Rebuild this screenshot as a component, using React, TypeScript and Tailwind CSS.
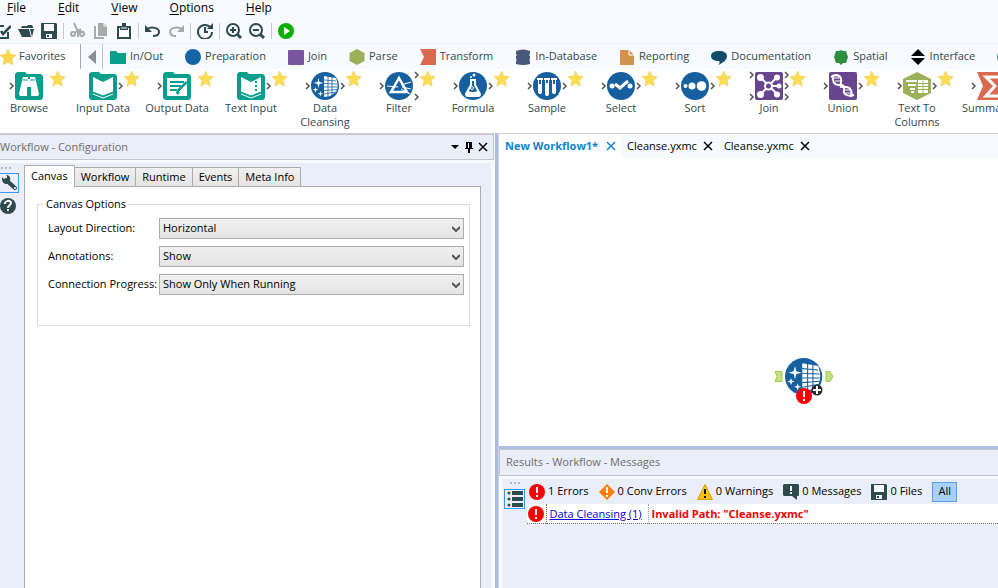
import type { ReactNode } from "react";

const TEAL = "#0a9f8d";
const BLUE = "#17609f";
const PURPLE = "#67468f";
const INK = "#2f4a4d";
const MUTED = "#a9a9a9";

const menus = ["File", "Edit", "View", "Options", "Help"];

/* ---------- toolbar ---------- */

function Glyph({ children }: { children: ReactNode }) {
  return (
    <svg viewBox="0 0 16 16" className="size-4 shrink-0" fill="none" aria-hidden="true">
      {children}
    </svg>
  );
}

const floppy = (
  <>
    <path d="M0 0h15l1 1v15H0z" fill={INK} />
    <path d="M3 1h10v7H3z" fill="#f7faff" />
    <path d="M5 11h6v4H5z" fill="#f7faff" />
    <path d="M6 12h2v2H6z" fill={INK} />
  </>
);

type ToolButton = { label: string; icon: ReactNode } | null;

const toolbar: ToolButton[] = [
  {
    label: "New",
    icon: (
      <>
        <path d="M9 3H1v12h12V9" stroke={INK} strokeWidth="2" />
        <path d="M6 8l2 3 8-8" stroke={INK} strokeWidth="2.500" />
      </>
    ),
  },
  {
    label: "Open",
    icon: (
      <>
        <path d="M3 5l1-2h5l1-1h4l1 2v1H3z" fill={INK} />
        <path d="M0 6h11l2 8H4z" fill={INK} />
        <path d="M12 6h4l-2 8z" fill={INK} />
      </>
    ),
  },
  { label: "Save", icon: floppy },
  null,
  {
    label: "Cut",
    icon: (
      <g stroke={MUTED} strokeWidth="2">
        <path d="M4 0l5 11M11 6L4 10M8 8l6 1" />
        <circle cx="3" cy="11" r="2" />
        <circle cx="12" cy="11" r="2" />
        <path d="M8 9v5" />
      </g>
    ),
  },
  {
    label: "Copy",
    icon: (
      <>
        <path d="M5 0h6l3 3v10H5z" fill={MUTED} />
        <path d="M11 0v3h3" stroke="#f7faff" />
        <path d="M2 3v12h9" stroke={MUTED} strokeWidth="2" />
      </>
    ),
  },
  {
    label: "Paste",
    icon: (
      <>
        <path d="M2 4h12v11H2z" stroke={INK} strokeWidth="2" />
        <path d="M4 3h8v4H4zM6 0h4v3H6z" fill={INK} />
        <path d="M5 5h6" stroke="#f7faff" />
      </>
    ),
  },
  null,
  {
    label: "Undo",
    icon: (
      <>
        <path d="M2 6c5-3 12-1 12 3 0 3-3 4-6 4" stroke={INK} strokeWidth="2" />
        <path d="M0 2v7h7z" fill={INK} />
      </>
    ),
  },
  {
    label: "Redo",
    icon: (
      <>
        <path d="M14 6C9 3 2 5 2 9c0 3 3 4 6 4" stroke={MUTED} strokeWidth="2" />
        <path d="M16 2v7H9z" fill={MUTED} />
      </>
    ),
  },
  null,
  {
    label: "Schedule",
    icon: (
      <>
        <path d="M13 4a7 7 0 1 0 2 5" stroke={INK} strokeWidth="2" />
        <path d="M10 6h6V0z" fill={INK} />
        <path d="M8 4v5h3" stroke={INK} strokeWidth="2" />
      </>
    ),
  },
  null,
  {
    label: "Zoom in",
    icon: (
      <g stroke={INK} strokeWidth="2">
        <circle cx="7" cy="7" r="6" />
        <path d="M11 11l4 4" strokeWidth="3" />
        <path d="M7 4v6M4 7h6" />
      </g>
    ),
  },
  {
    label: "Zoom out",
    icon: (
      <g stroke={INK} strokeWidth="2">
        <circle cx="7" cy="7" r="6" />
        <path d="M11 11l4 4" strokeWidth="3" />
        <path d="M4 7h6" />
      </g>
    ),
  },
  null,
  {
    label: "Run",
    icon: (
      <>
        <circle cx="8" cy="8" r="8" fill="#0db000" />
        <path d="M6 4l6 4-6 4z" fill="#fff" />
      </>
    ),
  },
];

/* ---------- tool categories ---------- */

const STAR = "M8 0l2.300 5.300L16 6l-4.200 3.900L13 16l-5-3-5 3 1.200-6.100L0 6l5.700-.7z";

const categories: { name: string; icon: ReactNode }[] = [
  { name: "In/Out", icon: <path d="M0 2h6l2 2h8v11H0z" fill={TEAL} /> },
  { name: "Preparation", icon: <circle cx="8" cy="8" r="8" fill="#1565a5" /> },
  { name: "Join", icon: <rect y="1" width="16" height="15" rx="1" fill="#79559f" /> },
  { name: "Parse", icon: <path d="M8 0l7.500 4v8L8 16 .5 12V4z" fill="#9bb059" /> },
  { name: "Transform", icon: <path d="M0 0h16v16H0l4-8z" fill="#d9694f" /> },
  {
    name: "In-Database",
    icon: <path d="M1 2q7-3 14 0v3l-1 1 1 1v3l-1 1 1 1v3q-7 2-14 0v-3l1-1-1-1V7l1-1-1-1z" fill="#485878" />,
  },
  {
    name: "Reporting",
    icon: (
      <>
        <path d="M1 1h9l5 5v10H1z" fill="#d3924e" />
        <path d="M10 1v5h5" stroke="#fff" />
      </>
    ),
  },
  {
    name: "Documentation",
    icon: <path d="M8 2c5 0 8 2 8 5 0 4-4 7-9 9 2-2 2-3 1-4-5 0-8-2-8-5s3-5 8-5z" fill="#124d6c" />,
  },
  {
    name: "Spatial",
    icon: <path d="M8 1l2 1 3 0 1 3 1 3-1 3-1 3-3 0-2 2-2-2-3 0-1-3-1-3 1-3 1-3 3 0z" fill="#2e8f3e" />,
  },
  { name: "Interface", icon: <path d="M8 0l7 7H1zM8 16l7-7H1z" fill="#000" /> },
  { name: "", icon: <circle cx="8" cy="8" r="8" fill="#3b9c8f" /> },
];

/* ---------- palette tools, each drawn in a 28 x 28 box ---------- */

const folder = <path d="M0 2l2-2h8l2 2h14l2 2v22l-2 2H2l-2-2z" fill={TEAL} />;
const disc = <circle cx="14" cy="14" r="14" fill={BLUE} />;

function CleansingArt() {
  return (
    <>
      {disc}
      <path d="M13 4l12 2q3 8 0 14l-6 4-6 1z" fill="#fff" />
      <path d="M13 8l12 1M13 11.500l13 .5M13 15h13M13 18.500l13-1M13 22l12-2M17 4v20M21 5v19" stroke={BLUE} strokeWidth=".8" />
      <path
        d="M7.500 6l1 4 4 1-4 1-1 4-1-4-4-1 4-1zM4.500 15l.7 2 2 .7-2 .7-.7 2-.7-2-2-.7 2-.7zM9.500 19l.7 2 2 .7-2 .7-.7 2-.7-2-2-.7 2-.7z"
        fill="#fff"
      />
    </>
  );
}

type Tool = { name: string; ins: number[]; outs: number[]; art: ReactNode };

const tools: Tool[] = [
  {
    name: "Browse",
    ins: [14],
    outs: [],
    art: (
      <>
        {folder}
        <path d="M8 5h5v2h2V5h5l1 4 3 13-1 2h-7v-9h-4v9H5l-1-2L7 9z" fill="#fff" />
        <path d="M8 8h5M15 8h5" stroke={TEAL} />
      </>
    ),
  },
  {
    name: "Input Data",
    ins: [],
    outs: [14],
    art: (
      <>
        {folder}
        <path d="M4 5l10 5 10-5v15l-10 4-10-4z" fill="#fff" />
        <path d="M4 20l10 4 10-4" stroke={TEAL} />
        <path d="M4 22l10 4 10-4" stroke="#fff" />
      </>
    ),
  },
  {
    name: "Output Data",
    ins: [14],
    outs: [],
    art: (
      <>
        {folder}
        <path d="M4 6h20v18H4z" fill="#fff" />
        <path d="M7 10h14M7 14h11M7 18h7" stroke={TEAL} strokeWidth="2" />
        <path d="M14 22l2-4 8-8" stroke={TEAL} strokeWidth="3" />
        <path d="M16 20l8-8" stroke="#fff" />
      </>
    ),
  },
  {
    name: "Text Input",
    ins: [],
    outs: [14],
    art: (
      <>
        {folder}
        <path d="M4 5l10 5 10-5v15l-10 4-10-4z" fill="#fff" />
        <path d="M4 20l10 4 10-4" stroke={TEAL} />
        <path d="M4 22l10 4 10-4" stroke="#fff" />
        <path d="M19 9v12" stroke={TEAL} strokeWidth="2" strokeDasharray="2 2" />
      </>
    ),
  },
  { name: "Data Cleansing", ins: [14], outs: [14], art: <CleansingArt /> },
  {
    name: "Filter",
    ins: [14],
    outs: [3, 25],
    art: (
      <>
        {disc}
        <path d="M14 6l8 14H6z" stroke="#fff" strokeWidth="2.500" />
        <path d="M2 14l11 1M16 13l10-3M17 15l9 2M16 17l9 5" stroke="#fff" />
      </>
    ),
  },
  {
    name: "Formula",
    ins: [14],
    outs: [14],
    art: (
      <>
        {disc}
        <path d="M11 8h6M12 8v5l-5 9q0 2 2 2h10q2 0 2-2l-5-9V8" stroke="#fff" strokeWidth="2" />
        <path d="M9 19q5 2 10 0l2 5H7z" fill="#fff" />
        <circle cx="13" cy="16" r="1.500" stroke="#fff" />
        <circle cx="15" cy="3" r="1.500" fill="#fff" />
        <circle cx="12" cy="5" r="1" fill="#fff" />
      </>
    ),
  },
  {
    name: "Sample",
    ins: [14],
    outs: [14],
    art: (
      <>
        {disc}
        <path d="M4 7h6M11 7h6M18 7h6" stroke="#fff" strokeWidth="2" />
        <path d="M5.500 8v12l1.500 2 1.500-2V8M12.500 8v14l1.500 2 1.500-2V8M19.500 8v12l1.500 2 1.500-2V8" stroke="#fff" />
        <path d="M5 12h4v9l-2 1-2-1zM12 11h4v12l-2 1-2-1zM19 12h4v9l-2 1-2-1z" fill="#fff" />
      </>
    ),
  },
  {
    name: "Select",
    ins: [14],
    outs: [14],
    art: (
      <>
        {disc}
        <circle cx="5" cy="14" r="2.500" fill="#fff" />
        <circle cx="23" cy="14" r="2.500" fill="#fff" />
        <path d="M8 12l5 4 8-7" stroke="#fff" strokeWidth="3" />
      </>
    ),
  },
  {
    name: "Sort",
    ins: [14],
    outs: [14],
    art: (
      <>
        {disc}
        <circle cx="4.500" cy="14" r="2" fill="#fff" />
        <circle cx="11" cy="14" r="3.500" fill="#fff" />
        <circle cx="20.500" cy="14" r="4.800" fill="#fff" />
      </>
    ),
  },
  {
    name: "Join",
    ins: [3, 25],
    outs: [3, 14, 25],
    art: (
      <>
        <rect width="28" height="28" rx="2" fill={PURPLE} />
        <path d="M5 5l18 18M22 5L5 23M14 14h9" stroke="#fff" strokeWidth="2" />
        <g fill="#fff">
          <circle cx="5.500" cy="5.500" r="3.500" />
          <circle cx="22" cy="5.500" r="3" />
          <circle cx="5.500" cy="22.500" r="3.500" />
          <circle cx="22" cy="22.500" r="3" />
          <circle cx="24" cy="14" r="2.500" />
        </g>
        <circle cx="13.500" cy="14" r="3.500" fill={PURPLE} stroke="#fff" strokeWidth="2" />
      </>
    ),
  },
  {
    name: "Union",
    ins: [14],
    outs: [14],
    art: (
      <>
        <rect width="28" height="28" rx="2" fill={PURPLE} />
        <path
          d="M2 5C8 1 13 4 12 10s1 5 5 5 7 4 5 10M4 3c-1 6 1 10 6 10s6 1 5 5 3 7 10 5"
          stroke="#fff"
          strokeWidth="2"
        />
        <path d="M5 6h5M6 9h5M13 12l-2 4M16 18h6M17 21h5" stroke="#fff" />
      </>
    ),
  },
  {
    name: "Text To Columns",
    ins: [14],
    outs: [14],
    art: (
      <>
        <path d="M14 0l14 7v14l-14 7-14-7V7z" fill="#9bb059" />
        <path d="M3 9h11M5 13h8M7 17h5M8 20h3" stroke="#fff" strokeWidth="2" />
        <path d="M15 8h10v13H15z" fill="#fff" />
        <path d="M15 11.500h10M15 14.500h10M15 17.500h10M20 9v12" stroke="#9bb059" />
      </>
    ),
  },
  {
    name: "Summarize",
    ins: [14],
    outs: [],
    art: (
      <>
        <path d="M0 0h28v28H0l6-14z" fill="#d9694f" />
        <path d="M28 5H9l9 9-9 10h19" stroke="#fff" strokeWidth="3" />
      </>
    ),
  },
];

function PaletteTool({ tool }: { tool: Tool }) {
  return (
    <button className="flex w-[74px] shrink-0 flex-col items-center pt-px text-[11px] leading-[14px] text-[#33484c]">
      <svg viewBox="0 0 74 30" className="h-[30px] w-[74px]" fill="none" aria-hidden="true">
        {tool.ins.map((y) => (
          <path key={y} d={`M18 ${y - 2}l3 3-3 3`} stroke="#555" strokeWidth="1.500" />
        ))}
        <g transform="translate(23 1)">{tool.art}</g>
        {tool.outs.map((y) => (
          <path key={y} d={`M53 ${y - 2}l3 3-3 3`} stroke="#555" strokeWidth="1.500" />
        ))}
        <path d={STAR} transform="translate(58 0) scale(.95)" fill="#fbdc55" stroke="#efc43f" strokeWidth=".5" />
      </svg>
      <span className="w-16">{tool.name}</span>
    </button>
  );
}

/* ---------- status marks ---------- */

const errorMark = (
  <>
    <circle cx="8" cy="8" r="8" fill="#fb0007" />
    <path d="M8 3v6M8 11v2" stroke="#fff" strokeWidth="2" />
  </>
);

const counters: { text: string; icon: ReactNode }[] = [
  { text: "1 Errors", icon: errorMark },
  {
    text: "0 Conv Errors",
    icon: (
      <>
        <path d="M8 0l8 8-8 8-8-8z" fill="#fb7f0e" />
        <path d="M8 3v6M8 11v2" stroke="#fff" strokeWidth="2" />
      </>
    ),
  },
  {
    text: "0 Warnings",
    icon: (
      <>
        <path d="M8 .5L15.500 15.500H.5z" fill="#fcc00d" stroke="#d8a20a" />
        <path d="M8 5v5M8 12v2" stroke="#111" strokeWidth="2" />
      </>
    ),
  },
  {
    text: "0 Messages",
    icon: (
      <>
        <path d="M1 0h14l1 1v10l-1 1h-1v4l-5-4H1l-1-1V1z" fill={INK} />
        <path d="M8 2v5M8 8v2" stroke="#fff" strokeWidth="2" />
      </>
    ),
  },
  { text: "0 Files", icon: floppy },
];

const options = [
  { id: "layout", label: "Layout Direction:", value: "Horizontal" },
  { id: "annotations", label: "Annotations:", value: "Show" },
  { id: "progress", label: "Connection Progress:", value: "Show Only When Running" },
];

function Cross() {
  return (
    <svg viewBox="0 0 10 10" className="size-[10px]" fill="none" stroke="currentColor" strokeWidth="1.500" aria-hidden="true">
      <path d="M1 1l8 8M9 1L1 9" />
    </svg>
  );
}

function Dots() {
  return (
    <svg viewBox="0 0 12 2" className="h-[2px] w-3" fill="#b5b8bf" aria-hidden="true">
      <path d="M1 0h2v2H1zM5 0h2v2H5zM9 0h2v2H9z" />
    </svg>
  );
}

function ConfigurationPanel() {
  return (
    <section className="flex w-[494px] shrink-0 flex-col">
      <header className="flex h-[26px] shrink-0 items-center border border-l-0 border-[#c3c4c8] bg-[#eaeef9] pr-[3px]">
        <h2 className="flex-1 text-[11px] text-[#6c6c6c]">Workflow - Configuration</h2>
        <button aria-label="Panel menu" className="flex w-[14px] justify-center">
          <svg viewBox="0 0 8 4" className="h-1 w-2" aria-hidden="true">
            <path d="M0 0h8L4 4z" />
          </svg>
        </button>
        <button aria-label="Pin panel" className="flex w-[14px] justify-center">
          <svg viewBox="0 0 8 11" className="h-[11px] w-2" aria-hidden="true">
            <path d="M1 0h6v6h1v1H0V6h1zM3 1v5h1V1zM3 7h2v4H3z" fillRule="evenodd" />
          </svg>
        </button>
        <button aria-label="Close panel" className="flex w-[14px] justify-center">
          <Cross />
        </button>
      </header>
      <div className="flex flex-1 bg-[#f7faff] pt-[3px] pr-[3px]">
        <div className="flex w-5 shrink-0 flex-col items-start bg-[#eaeef9] pt-1">
          <Dots />
          <button aria-label="Configuration" className="mt-1 flex h-5 w-[19px] items-center justify-end border border-l-0 border-[#3a96f5]">
            <svg viewBox="0 0 16 16" className="size-4" fill="none" aria-hidden="true">
              <path d="M4 5l9 8" stroke={INK} strokeWidth="4" strokeLinecap="round" />
              <path d="M0 2l3 3 2-1V1L4 0c3 0 5 2 4 6L5 9C2 9 0 7 0 4z" fill={INK} />
              <circle cx="13" cy="13" r="1" fill="#fff" />
            </svg>
          </button>
          <button aria-label="Help" className="mt-[5px]">
            <svg viewBox="0 0 16 16" className="size-4" fill="none" aria-hidden="true">
              <circle cx="8" cy="8" r="8" fill={INK} />
              <path d="M5 6c0-4 6-4 6-1 0 2-3 2-3 5M8 11v2" stroke="#fff" strokeWidth="2" />
            </svg>
          </button>
        </div>
        <div className="flex flex-1 flex-col bg-[#eaeef9] pt-[2px] pr-[10px] pl-1">
          <div role="tablist" className="flex items-end text-[11px]">
            <button role="tab" aria-selected="true" className="relative -mb-px h-[22px] border border-b-0 border-[#acacac] bg-white px-[6px]">
              Canvas
            </button>
            {["Workflow", "Runtime", "Events", "Meta Info"].map((tab) => (
              <button
                role="tab"
                aria-selected="false"
                key={tab}
                className="h-[19px] border border-b-0 border-l-0 border-[#acacac] bg-linear-to-b from-[#f0f0f0] to-[#e5e5e5] px-[6px]"
              >
                {tab}
              </button>
            ))}
          </div>
          <div className="flex-1 border border-b-0 border-[#acacac] bg-white px-[10px] pt-[10px] pl-3">
            <fieldset className="border border-[#dcdcdc] pr-[5px] pb-[30px] pl-[10px] text-[11px]">
              <legend className="-ml-1 px-[2px] leading-[14px]">Canvas Options</legend>
              <div className="flex flex-col gap-[7px] pt-[7px]">
                {options.map((o) => (
                  <div key={o.id} className="flex items-center">
                    <label htmlFor={o.id} className="w-[111px] shrink-0 whitespace-nowrap">
                      {o.label}
                    </label>
                    <div className="relative flex-1">
                      <select
                        id={o.id}
                        className="block h-[21px] w-full appearance-none border border-[#acacac] bg-linear-to-b from-[#f0f0f0] to-[#e4e4e4] pl-[3px]"
                      >
                        <option>{o.value}</option>
                      </select>
                      <svg viewBox="0 0 8 6" className="pointer-events-none absolute top-2 right-1 h-[6px] w-2" fill="none" aria-hidden="true">
                        <path d="M0 1l4 4 4-4" stroke="#555" strokeWidth="2" />
                      </svg>
                    </div>
                  </div>
                ))}
              </div>
            </fieldset>
          </div>
        </div>
      </div>
    </section>
  );
}

function WorkflowCanvas() {
  return (
    <div className="relative flex-1 bg-white">
      <svg viewBox="0 0 60 48" className="absolute top-[200px] left-[275px] h-12 w-[60px]" fill="none" role="img" aria-label="Data Cleansing tool">
        <path d="M1 13.500h7v10H1l2-5z" fill="#c3e27e" stroke="#a3c95a" />
        <path d="M52 13.500h4l3 5-3 5h-4z" fill="#c3e27e" stroke="#a3c95a" />
        <g transform="translate(11 0) scale(1.330)">
          <CleansingArt />
        </g>
        <circle cx="43" cy="32" r="5.500" fill="#2b2b2b" />
        <path d="M43 28v8M39 32h8" stroke="#fff" strokeWidth="2" />
        <g transform="translate(22 30)">{errorMark}</g>
      </svg>
    </div>
  );
}

function ResultsPanel() {
  return (
    <section className="flex h-[139px] shrink-0 flex-col bg-[#f7faff]">
      <header className="flex h-[27px] shrink-0 items-center border border-r-0 border-[#c3c4c8] bg-[#eaeef9] pl-[6px]">
        <h2 className="text-[11px] text-[#6c6c6c]">Results - Workflow - Messages</h2>
      </header>
      <div className="flex flex-1 pt-[3px] pl-[3px]">
        <div className="flex w-[25px] shrink-0 flex-col items-center bg-[#eaeef9] pt-[3px]">
          <Dots />
          <button aria-label="Message list" className="mt-[5px] flex h-5 w-[21px] items-center justify-center border border-[#3a96f5]">
            <svg viewBox="0 0 16 16" className="size-4" fill={INK} aria-hidden="true">
              <path d="M5 0h11v4H5zM5 6h11v4H5zM5 12h11v4H5z" />
              <circle cx="2" cy="2" r="1.500" />
              <circle cx="2" cy="8" r="1.500" />
              <circle cx="2" cy="14" r="1.500" />
            </svg>
          </button>
        </div>
        <div className="flex flex-1 flex-col bg-[#eaeef9]">
          <div className="flex h-[25px] shrink-0 items-center gap-[10px] pl-[2px] text-[11px]">
            {counters.map((c) => (
              <button key={c.text} className="flex items-center gap-[3px] whitespace-nowrap">
                <Glyph>{c.icon}</Glyph>
                {c.text}
              </button>
            ))}
            <button className="h-5 w-[25px] border border-[#5b9fe8] bg-[#a9d0fb]">All</button>
          </div>
          <table className="w-full border-collapse bg-white text-[11px] leading-[19px]">
            <tbody>
              <tr className="border-b border-dotted border-[#666]">
                <td className="w-[19px] border-r border-dotted border-[#666] pl-px">
                  <Glyph>{errorMark}</Glyph>
                </td>
                <td className="w-[102px] border-r border-dotted border-[#8aa4d0] pl-[3px] whitespace-nowrap">
                  <a href="#data-cleansing" className="text-[#0000ee] underline">
                    Data Cleansing (1)
                  </a>
                </td>
                <td className="pl-[3px] font-bold text-[#f60000]">Invalid Path: "Cleanse.yxmc"</td>
              </tr>
            </tbody>
          </table>
        </div>
      </div>
    </section>
  );
}

export default function App() {
  return (
    <div className="flex h-screen flex-col overflow-hidden bg-[#f7faff] font-['Open_Sans','Noto_Sans',sans-serif] text-black">
      <nav className="flex h-[19px] shrink-0 items-start gap-8 pl-[7px] text-[12px] leading-4">
        {menus.map((m) => (
          <button key={m}>
            <span className="underline underline-offset-2">{m[0]}</span>
            {m.slice(1)}
          </button>
        ))}
      </nav>

      <div className="-ml-[9px] flex h-6 shrink-0 items-center">
        {toolbar.map((t, i) =>
          t ? (
            <button key={t.label} aria-label={t.label} className="flex w-[23px] justify-center">
              <Glyph>{t.icon}</Glyph>
            </button>
          ) : (
            <span key={i} className="flex w-[6px] justify-center">
              <span className="h-4 w-px bg-[#c6c8cc]" />
            </span>
          ),
        )}
      </div>

      <div className="flex h-[26px] shrink-0 items-stretch border-t border-[#eceef2] text-[11px] text-[#33484c]">
        <button className="flex w-[81px] shrink-0 items-center gap-[3px] border-r border-[#a5a8ad] bg-white">
          <svg viewBox="0 0 16 16" className="size-4" aria-hidden="true">
            <path d={STAR} fill="#fbd84f" stroke="#efc43f" strokeWidth=".5" />
          </svg>
          Favorites
        </button>
        <button aria-label="Scroll categories left" className="flex w-[22px] shrink-0 items-center justify-center border-r border-[#c0c2c6]">
          <svg viewBox="0 0 8 14" className="h-[14px] w-2" aria-hidden="true">
            <path d="M8 0v14L0 7z" fill="#8b8e94" />
          </svg>
        </button>
        <div className="flex items-center gap-[22px] pl-[7px]">
          {categories.map((c) => (
            <button key={c.name} aria-label={c.name || "More"} className="flex items-center gap-1 whitespace-nowrap">
              <Glyph>{c.icon}</Glyph>
              {c.name}
            </button>
          ))}
        </div>
      </div>

      <div className="-ml-2 flex h-16 shrink-0 items-start bg-white pt-px">
        {tools.map((t) => (
          <PaletteTool key={t.name} tool={t} />
        ))}
      </div>

      <main className="flex min-h-0 flex-1 border-t border-[#cfd0d4]">
        <ConfigurationPanel />
        <div className="ml-px w-[3px] shrink-0 bg-[#abbde0]" />
        <div className="flex min-w-0 flex-1 flex-col border-l border-[#d0d3da]">
          <div className="flex h-6 shrink-0 items-stretch text-[11px]">
            <div className="flex items-center gap-2 bg-white pr-[5px] pl-[6px] font-bold text-[#1283cd]">
              <button>New Workflow1*</button>
              <button aria-label="Close New Workflow1">
                <Cross />
              </button>
            </div>
            {[1, 2].map((n) => (
              <div key={n} className="flex items-center gap-[6px] pr-[5px] pl-[6px]">
                <button>Cleanse.yxmc</button>
                <button aria-label="Close Cleanse.yxmc">
                  <Cross />
                </button>
              </div>
            ))}
          </div>
          <WorkflowCanvas />
          <div className="h-[3px] shrink-0 bg-[#abbde0]" />
          <ResultsPanel />
        </div>
      </main>
    </div>
  );
}
